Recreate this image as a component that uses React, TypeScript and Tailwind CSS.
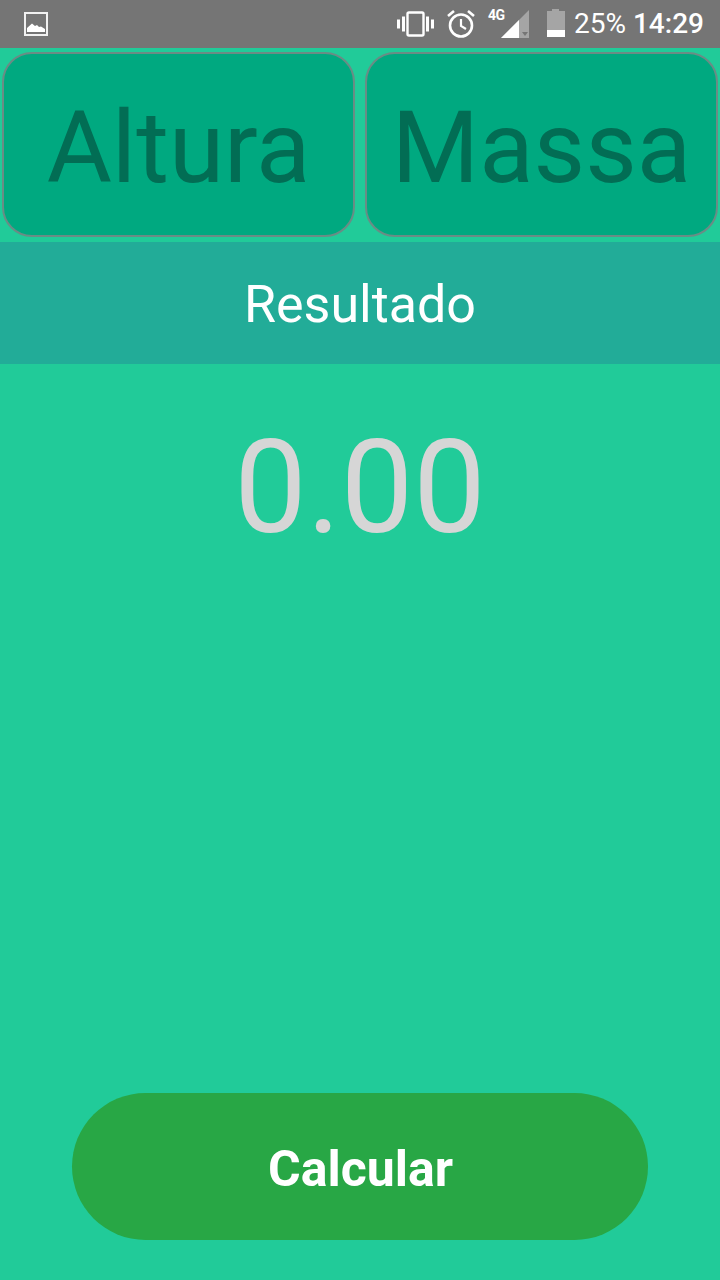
export default function App() {
  return (
    <div className="flex h-[1280px] w-[720px] flex-col overflow-hidden bg-[#21cb99] font-['Roboto',sans-serif]">
      <div className="flex h-12 items-center justify-between bg-[#757575] pl-6 pr-4 text-white">
        <svg width="24" height="24" viewBox="0 0 24 24" fill="none">
          <rect x="1" y="1" width="22" height="22" stroke="#fff" strokeWidth="2" opacity="0.9" />
          <path d="M3 20 L3 16 L8 11.5 L11 14 L13 13 L15 15 L17 14.5 L21 17 L21 20 Z" fill="#fff" />
        </svg>
        <div className="flex items-center">
          <svg width="37" height="26" viewBox="0 0 37 26" fill="none" className="mr-[12px]">
            <rect x="10.5" y="1.5" width="16" height="23" rx="1.5" stroke="#fff" strokeWidth="2.4" />
            <rect x="0" y="8.5" width="3" height="9" fill="#fff" />
            <rect x="5" y="5.5" width="3" height="15" fill="#fff" />
            <rect x="29" y="5.5" width="3" height="15" fill="#fff" />
            <rect x="34" y="8.5" width="3" height="9" fill="#fff" />
          </svg>
          <svg width="30" height="30" viewBox="0 0 30 30" fill="none" className="mr-[12px]">
            <circle cx="15" cy="16.5" r="11" stroke="#fff" strokeWidth="2.6" />
            <path d="M15 10 V17 L20 20" stroke="#fff" strokeWidth="2.2" />
            <path d="M2 7 L8 2 M28 7 L22 2" stroke="#fff" strokeWidth="2.6" />
          </svg>
          <div className="relative mr-[16px] h-[32px] w-[42px]">
            <span className="absolute left-0 top-[-3px] text-[14px] font-bold leading-[20px] tracking-[-0.5px]">4G</span>
            <svg width="30" height="30" viewBox="0 0 30 30" className="absolute left-[13px] top-[1px]">
              <path d="M0 29 L28 1 V29 Z" fill="#fff" opacity="0.35" />
              <path d="M0 29 L18 11 V29 Z" fill="#fff" />
              <path d="M21 23 H27 L24 27 Z" fill="#757575" />
            </svg>
          </div>
          <svg width="20" height="30" viewBox="0 0 20 30" className="mr-[8px]">
            <path d="M6 0 H13 V2 H19 V28 H1 V2 H6 Z" fill="#fff" opacity="0.35" />
            <rect x="1" y="21" width="18" height="7" fill="#fff" />
          </svg>
          <span className="text-[28px] leading-none">25%</span>
          <span className="ml-[7px] text-[28px] font-medium leading-none">14:29</span>
        </div>
      </div>
      <div className="flex gap-[10px] px-[2px] pt-1">
        {["Altura", "Massa"].map((t) => (
          <div
            key={t}
            className="flex h-[185px] flex-1 items-center justify-center rounded-[30px] border-2 border-[#6a8c85] bg-[#00a980] pt-[7px] text-[100px] leading-none text-[#026d54]"
          >
            {t}
          </div>
        ))}
      </div>
      <div className="mt-[5px] flex h-[122px] items-center justify-center bg-[#22ac98] pt-[3px] text-[52px] text-white">
        Resultado
      </div>
      <div className="mt-[52px] text-center text-[129px] leading-[144px] text-[#d6d6d6]">0.00</div>
      <div className="mx-[72px] mt-auto mb-10 flex h-[147px] items-center justify-center rounded-full bg-[#28a745] pl-[1px] pt-[5px] text-[50px] font-bold text-white">
        Calcular
      </div>
    </div>
  );
}
